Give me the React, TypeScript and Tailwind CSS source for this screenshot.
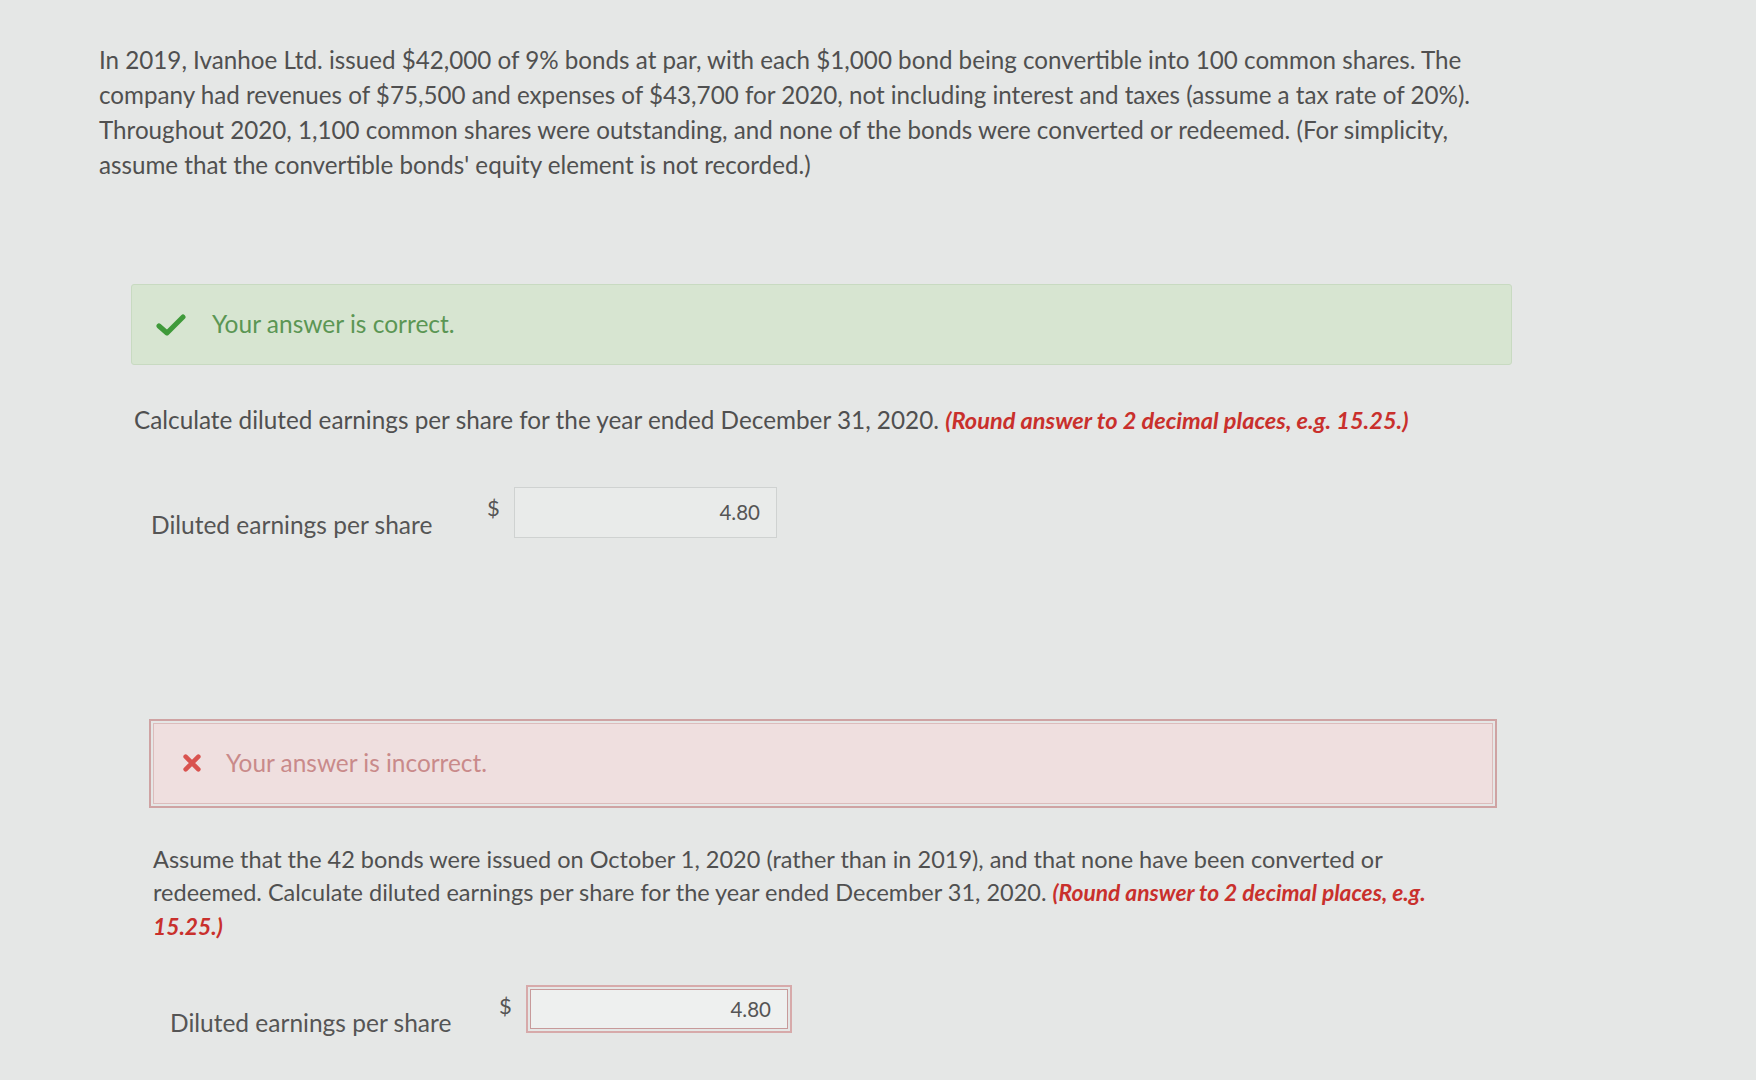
import React from 'react';

const font = { fontFamily: 'Lato, "Open Sans", sans-serif' };

const Check = () => (
  <svg width="30" height="24" viewBox="0 0 30 24" className="shrink-0">
    <path d="M3 13 L11 20 L27 4" fill="none" stroke="#3f9a3a" strokeWidth="5" strokeLinecap="round" strokeLinejoin="round" />
  </svg>
);

const Cross = () => (
  <svg width="20" height="20" viewBox="0 0 22 22" className="shrink-0">
    <path d="M4 4 L18 18 M18 4 L4 18" fill="none" stroke="#d9534f" strokeWidth="5" strokeLinecap="round" />
  </svg>
);

const Hint = () => (
  <span className="text-[0.97em] font-bold italic text-[#c9302c]">(Round answer to 2 decimal places, e.g. 15.25.)</span>
);

const AnswerRow = ({ wrong, labelPad, labelW }: { wrong?: boolean; labelPad: string; labelW: string }) => (
  <div className={`flex items-start ${labelPad}`}>
    <span className={`mt-[20px] ${labelW} text-[24.5px] text-[#555]`}>Diluted earnings per share</span>
    <span className="w-[27px] pt-[4px] text-[22px] text-[#555]">$</span>
    {wrong ? (
      <div className="border-2 border-[#d7aaaa] p-[2px]">
        <div className="flex h-[40px] w-[258px] items-center justify-end border border-[#c79a9a] bg-[#eef0ef] pr-[16px] text-[20.5px] text-[#555]">
          4.80
        </div>
      </div>
    ) : (
      <div className="flex h-[51px] w-[263px] items-center justify-end border border-[#cfd2d1] bg-[#e9ebea] pr-[16px] text-[20.5px] text-[#555]">
        4.80
      </div>
    )}
  </div>
);

export default function App() {
  return (
    <div className="min-h-[1080px] w-full bg-[#e5e7e6] text-[#505050]" style={font}>
      <p className="w-[1512px] pl-[99px] pt-[42px] text-[24.2px] leading-[35px]">
        In 2019, Ivanhoe Ltd. issued $42,000 of 9% bonds at par, with each $1,000 bond being convertible into 100 common shares. The
        company had revenues of $75,500 and expenses of $43,700 for 2020, not including interest and taxes (assume a tax rate of 20%).
        Throughout 2020, 1,100 common shares were outstanding, and none of the bonds were converted or redeemed. (For simplicity,
        assume that the convertible bonds' equity element is not recorded.)
      </p>

      <div className="ml-[131px] mt-[102px] flex h-[81px] w-[1381px] items-center gap-[26px] rounded-[3px] border border-[#c8dac1] bg-[#d7e5d1] pl-[24px]">
        <Check />
        <span className="text-[24.5px] text-[#5b9654]">Your answer is correct.</span>
      </div>

      <p className="ml-[134px] mt-[40px] text-[24.3px] leading-[30px]">
        Calculate diluted earnings per share for the year ended December 31, 2020. <Hint />
      </p>

      <div className="mt-[52px]">
        <AnswerRow labelPad="pl-[151px]" labelW="w-[336px]" />
      </div>

      <div className="ml-[149px] mt-[175px] w-fit border-2 border-[#cfa3a3] p-[2px]">
        <div className="flex h-[81px] w-[1340px] items-center gap-[24px] border border-[#dcbcbc] bg-[#efdfdf] pl-[28px]">
          <Cross />
          <span className="text-[24.4px] text-[#c98a8a]">Your answer is incorrect.</span>
        </div>
      </div>

      <p className="ml-[153px] mt-[35px] w-[1300px] text-[23.5px] leading-[33.5px]">
        Assume that the 42 bonds were issued on October 1, 2020 (rather than in 2019), and that none have been converted or
        redeemed. Calculate diluted earnings per share for the year ended December 31, 2020. <Hint />
      </p>

      <div className="mt-[42px]">
        <AnswerRow wrong labelPad="pl-[170px]" labelW="w-[329px]" />
      </div>
    </div>
  );
}
